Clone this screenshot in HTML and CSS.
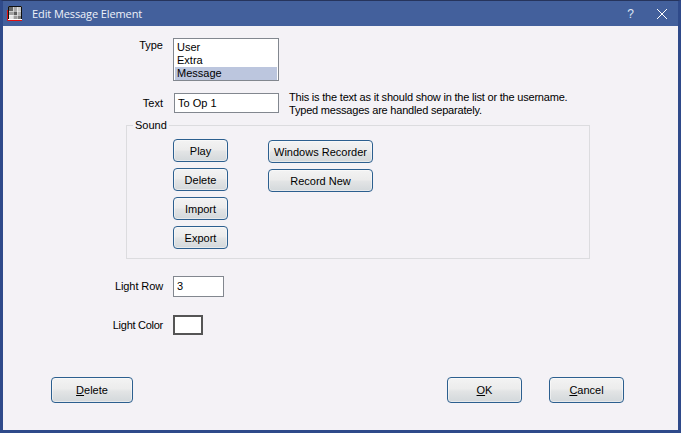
FILE: index.html
```html
<!DOCTYPE html>
<html lang="en">
<head>
<meta charset="utf-8">
<title>Edit Message Element</title>
<link rel="stylesheet" href="styles.css">
</head>
<body>
<div class="window">
  <header class="titlebar">
    <svg class="app-icon" width="15" height="15" viewBox="0 0 15 15">
      <rect x="1" y="0" width="14" height="14" fill="#fff"/>
      <rect x="2" y="1" width="4" height="4" fill="#666"/>
      <rect x="6.5" y="1" width="3.5" height="4" fill="#a8a8a8"/>
      <rect x="10.5" y="1" width="3.5" height="4" fill="#c8c8c8"/>
      <rect x="2" y="5.5" width="4" height="3.5" fill="#a0a0a0"/>
      <rect x="6.5" y="5.5" width="3.5" height="3.5" fill="#5e5e5e"/>
      <rect x="10.5" y="5.5" width="3.5" height="3.5" fill="#b4b4b4"/>
      <rect x="2" y="9.5" width="4" height="3.5" fill="#e4e4e4"/>
      <rect x="6.5" y="9.5" width="3.5" height="3.5" fill="#9c9c9c"/>
      <rect x="10.5" y="9.5" width="3.5" height="3.5" fill="#7c7c7c"/>
      <path d="M1.5 13V0.5H14.5V13" fill="none" stroke="#101010"/>
      <path d="M0.5 4V14.5H15" fill="none" stroke="#e01010"/>
    </svg>
    <span class="title">Edit Message Element</span>
    <span class="help">?</span>
    <svg class="close" width="12" height="12" viewBox="0 0 12 12">
      <path d="M1 1L11 11M11 1L1 11" stroke="#fff" stroke-width="1"/>
    </svg>
  </header>

  <main class="body">
    <div class="row row-type">
      <span class="label label-type">Type</span>
      <div class="listbox">
        <div class="item">User</div>
        <div class="item">Extra</div>
        <div class="item selected">Message</div>
      </div>
    </div>

    <div class="row row-text">
      <span class="label">Text</span>
      <div class="input input-text">To Op 1</div>
      <p class="hint">This is the text as it should show in the list or the username.<br>Typed messages are handled separately.</p>
    </div>

    <fieldset class="group">
      <legend class="legend">Sound</legend>
      <div class="col col-left">
        <button class="btn small">Play</button>
        <button class="btn small">Delete</button>
        <button class="btn small">Import</button>
        <button class="btn small">Export</button>
      </div>
      <div class="col col-right">
        <button class="btn wide">Windows Recorder</button>
        <button class="btn wide">Record New</button>
      </div>
    </fieldset>

    <div class="row row-light">
      <span class="label tight-1">Light Row</span>
      <div class="input input-row">3</div>
    </div>

    <div class="row row-color">
      <span class="label tight-2">Light Color</span>
      <div class="swatch"></div>
    </div>

    <footer class="actions">
      <button class="btn action delete"><u>D</u>elete</button>
      <button class="btn action ok"><u>O</u>K</button>
      <button class="btn action"><u>C</u>ancel</button>
    </footer>
  </main>
</div>
</body>
</html>
```
FILE: styles.css
```css
* { box-sizing: border-box; }
html, body { margin: 0; padding: 0; }
body {
  width: 681px;
  height: 433px;
  overflow: hidden;
  font-family: "Liberation Sans", Arial, sans-serif;
  font-size: 11px;
  color: #000;
}
.window {
  width: 681px;
  height: 433px;
  display: flex;
  flex-direction: column;
  background: #f4f2f6;
  border: 3px solid #2f4a8a;
  border-top: 1px solid #26345c;
}
.titlebar {
  height: 25px;
  flex: none;
  display: flex;
  align-items: center;
  background: #43609c;
  color: #fff;
  padding: 0 0 0 4px;
}
.app-icon { flex: none; }
.title { margin-left: 10px; color: #eef2fa; font-family: "Open Sans", sans-serif; font-size: 11px; letter-spacing: -0.1px; }
.help { margin-left: auto; margin-right: 22px; font-size: 12px; color: #dfe8f6; }
.close { margin-right: 10px; }

.body { flex: 1; display: flex; flex-direction: column; min-height: 0; }
.row { display: flex; align-items: flex-start; }
.label { width: 160px; text-align: right; flex: none; line-height: 13px; }
.tight-1 { letter-spacing: -0.1px; }
.tight-2 { letter-spacing: -0.27px; }
.row-type { margin-top: 12px; height: 43px; }
.label-type { padding-top: 1px; }
.listbox {
  margin-left: 10px;
  width: 106px;
  height: 43px;
  background: #fff;
  border: 1px solid #82878f;
  padding: 2px 1px 0;
  line-height: 13px;
}
.item { padding-left: 2px; height: 13px; }
.selected { background: #bcc6de; }

.row-text { margin-top: 12px; height: 26px; align-items: flex-start; }
.row-text .label { padding-top: 4px; }
.input {
  background: #fff;
  border: 1px solid #82878f;
  padding: 3px 3px 0;
  line-height: 13px;
  flex: none;
}
.input-text { margin-left: 11px; width: 105px; height: 20px; }
.hint { margin: -2px 0 0 10px; line-height: 13px; letter-spacing: -0.2px; }

.group {
  margin: 0 0 0 123px;
  padding: 0;
  width: 464px;
  height: 140px;
  border: 1px solid #dcdcdf;
  display: flex;
  position: relative;
}
.legend {
  padding: 0 2px;
  margin-left: 6px;
  line-height: 13px;
  height: 13px;
}
.col { display: flex; flex-direction: column; }
.col-left { margin: 7px 0 0 46px; gap: 6px; }
.col-right { margin: 8px 0 0 40px; gap: 6px; }

.btn {
  font: inherit;
  color: #000;
  padding: 0;
  border: 1px solid #2c5f8f;
  border-radius: 4px;
  background: linear-gradient(#f3f3f3 0%, #ececec 45%, #e2e4e5 55%, #d3d8db 100%);
  box-shadow: inset 0 0 0 1px rgba(255, 255, 255, 0.45);
  display: block;
}
.small { width: 55px; height: 23px; }
.wide { width: 105px; height: 23px; }

.row-light { margin-top: 17px; height: 21px; }
.row-light .label { padding-top: 4px; }
.input-row { margin-left: 10px; width: 51px; height: 21px; }
.row-color { margin-top: 18px; height: 20px; }
.row-color .label { padding-top: 4px; }
.swatch {
  margin-left: 10px;
  width: 30px;
  height: 20px;
  background: #fff;
  border: 2px solid #555;
}
.actions { display: flex; margin-top: 42px; padding-left: 48px; }
.action { width: 75px; height: 26px; }
.delete { width: 82px; }
.ok { margin-left: 314px; margin-right: 27px; }
```
